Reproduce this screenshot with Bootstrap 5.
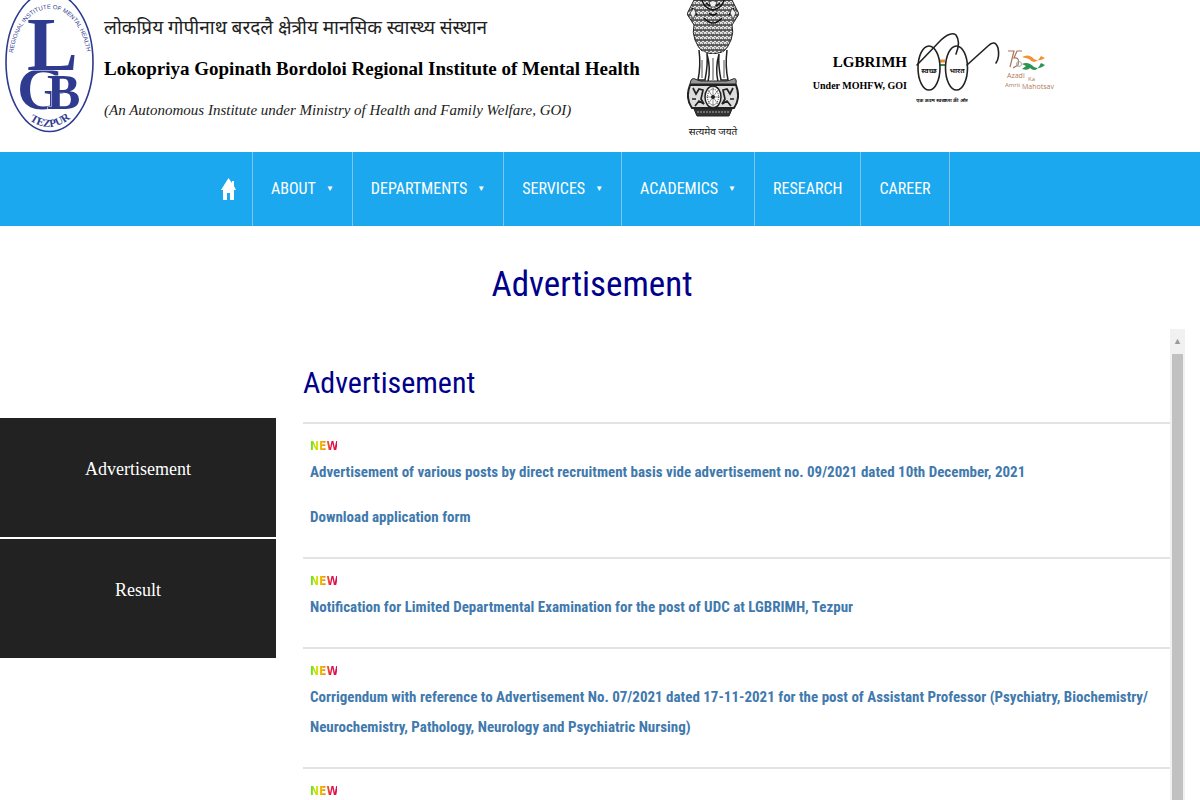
<!DOCTYPE html>
<html lang="en">
<head>
<meta charset="utf-8">
<meta name="viewport" content="width=device-width, initial-scale=1">
<title>Advertisement - LGBRIMH</title>
<link href="https://cdn.jsdelivr.net/npm/bootstrap@5.3.0/dist/css/bootstrap.min.css" rel="stylesheet">
<style>
body { font-family: "Roboto Condensed", "Liberation Sans", sans-serif; color: #000; background: #fff; }
a { text-decoration: none; }
.site-head { height: 152px; font-family: "Liberation Serif", "Noto Sans Devanagari", serif; line-height: 24px; white-space: nowrap; }
.crest { width: 104px; }
.names { width: 583px; padding-top: 16px; }
.names .hindi { font-size: 19px; margin-bottom: 17px; color: #222; }
.names .title { font-size: 19px; font-weight: 700; margin-bottom: 17px; }
.names .under { font-size: 15px; font-style: italic; color: #222; }
.emblem { width: 52px; }
.dept { width: 168px; padding-top: 50px; }
.dept .abbr { font-size: 15px; font-weight: 700; }
.dept .ministry { font-size: 10px; font-weight: 700; }
.main-nav { background: #1ba8ef; height: 74px; padding-left: 205px; }
.main-nav a { color: #fff; font-size: 16px; padding: 0 18px; border-right: 1px solid #7fc4ec; }
.main-nav a:first-child { padding: 0 16px; }
.main-nav .caret { font-size: 8px; margin-left: 10px; }
h1, h2 { color: #00008b; font-weight: 400; }
h1 { font-size: 35px; line-height: 42px; padding-top: 38px; margin-bottom: 23px; }
h2 { font-size: 30px; line-height: 36px; padding-top: 36px; margin-bottom: 21px; }
.side { width: 23%; padding-top: 89px; }
.side a { background: #222; color: #fff; height: 119px; padding-top: 36px; margin-bottom: 2px; font: 18px/30px "Liberation Serif", serif; }
.side a:hover { background: #333; }
.panel { margin-left: 27px; margin-right: 15px; min-width: 0; }
.notice { border-top: 2px solid #e3e3e3; padding: 12px 8px 25px 7px; font-size: 15px; line-height: 30px; font-weight: 700; }
.notice a { color: #4179ad; }
.notice p { margin: 0 0 15px; }
.notice p:last-child { margin: 0; }
.new-tag { display: block; width: 27px; height: 21px; font: 700 12px/21px "DejaVu Sans Condensed", sans-serif; background: linear-gradient(90deg, #5be01c, #e8e000 30%, #f08a10 55%, #e0104c 80%); -webkit-background-clip: text; background-clip: text; color: transparent; }
.track { width: 15px; background: #f1f1f1; }
.track .up { height: 25px; font-size: 9px; color: #999; }
.track .thumb { background: #c1c1c1; margin: 0 2px; }
</style>
</head>
<body class="vh-100 overflow-hidden d-flex flex-column">
<header class="site-head d-flex align-items-start flex-shrink-0">
  <svg class="crest flex-shrink-0" height="140" viewBox="0 0 104 140" fill="#2e3b8f" role="img" aria-label="Institute crest">
    <defs>
      <path id="ringTop" d="M13 53A37.500 54 0 0 1 87 55"/>
      <path id="ringLow" d="M28 119Q50 136 72 117"/>
    </defs>
    <ellipse cx="49.500" cy="62" rx="43.500" ry="69.500" fill="none" stroke="#2e3b8f" stroke-width="1.600"/>
    <text font-family="Liberation Sans" font-size="6"><textPath href="#ringTop">REGIONAL INSTITUTE OF MENTAL HEALTH</textPath></text>
    <text font-family="Liberation Serif" font-weight="700" font-size="11" text-anchor="middle"><textPath href="#ringLow" startOffset="50%">TEZPUR</textPath></text>
    <g font-family="Liberation Serif" font-weight="700" stroke="#fff" stroke-width="1" paint-order="stroke">
      <text x="17" y="109" font-size="62">G</text>
      <text x="27" y="70" font-size="76">L</text>
      <text x="47" y="109" font-size="50">B</text>
    </g>
  </svg>
  <div class="names flex-shrink-0">
    <div class="hindi" lang="hi">लोकप्रिय गोपीनाथ बरदलै क्षेत्रीय मानसिक स्वास्थ्य संस्थान</div>
    <div class="title">Lokopriya Gopinath Bordoloi Regional Institute of Mental Health</div>
    <div class="under">(An Autonomous Institute under Ministry of Health and Family Welfare, GOI)</div>
  </div>
  <svg class="emblem flex-shrink-0" height="140" viewBox="0 0 52 140" fill="none" stroke="#222" role="img" aria-label="State emblem of India">
    <defs><pattern id="mane" width="4" height="5" patternUnits="userSpaceOnUse"><rect width="4" height="5" fill="#555" stroke="none"/><path d="M0 1q2 3 4 0M1 4q1-2 3 0" stroke="#eee" stroke-width="1.200"/></pattern></defs>
    <path d="M7 0H45L52 14 45 25Q47 32 44 40Q41 48 36 52L26 54 16 52Q11 48 8 40Q5 32 7 25L0 14Z" fill="url(#mane)"/>
    <path d="M15 0q2 8 11 10q9-2 11-10M19 3l4 3M33 3l-4 3M22 13q4 4 8 0M5 8l5 7M47 8l-5 7M17 18q9 10 18 0" stroke="#111" stroke-width="1.300"/>
    <path d="M22 2q4-3 8 0l-2 5h-4zM3 13l4-5 2 5-3 6zM49 13l-4-5-2 5 3 6z" fill="#eee" stroke-width=".8"/>
    <path d="M12 50Q14 66 11 80H18Q21 65 20 53M20 54Q24 68 21 82H31Q28 68 32 54M32 54Q31 65 34 80H41Q38 66 40 50" fill="#fff" stroke-width="1.500"/>
    <path d="M26 58V80M15 60v18M37 60v18" stroke-width=".8"/>
    <path d="M3 84Q4 77 8 79T14 81T21 81T31 81T39 81T46 79T49 84Z" fill="#999"/>
    <path d="M3 85H49Q54 98 47 108H5Q-2 98 3 85Z" fill="#ddd" stroke-width="2"/>
    <path d="M6 88l3 6 3-5 4 1-2 9 3 5-5-3-4 5M46 88l-3 6-3-5-4 1 2 9-3 5 5-3 4 5M5 99h4M43 99h4" stroke-width="1.700"/>
    <ellipse cx="26" cy="97" rx="8" ry="11" fill="#fff" stroke-width="1.500"/>
    <ellipse cx="26" cy="97" rx="5.500" ry="8" stroke-dasharray="1 1"/>
    <path d="M26 87v20M19 97h14M21 90l10 14M31 90l-10 14" stroke-width=".5"/>
    <circle cx="26" cy="97" r="1.500" fill="#222"/>
    <path d="M7 109H45L42 116H10Z" fill="#333"/><path d="M10 112H42" stroke="#aaa" stroke-dasharray="2 1"/>
    <text x="26" y="135" text-anchor="middle" font-family="Noto Sans Devanagari" font-size="10" fill="#111" stroke="none" lang="hi">सत्यमेव जयते</text>
  </svg>
  <div class="dept text-end flex-shrink-0">
    <div class="abbr">LGBRIMH</div>
    <div class="ministry">Under MOHFW, GOI</div>
  </div>
  <svg class="flex-shrink-0" width="152" height="140" viewBox="907 0 152 140" fill="none" stroke="#222" stroke-width="1.600" role="img" aria-label="Swachh Bharat and Azadi Ka Amrit Mahotsav">
    <path d="M940 61H945" stroke="#f08b2c" stroke-width="3"/><path d="M940 65H945" stroke="#368b47" stroke-width="2"/>
    <ellipse cx="929" cy="68" rx="11" ry="22"/><ellipse cx="956.500" cy="68" rx="11" ry="22"/>
    <path d="M917 65L941 40Q951 31 956 35Q961 42 956 54M967 65L988 46Q995 39 998 48Q1000 57 996 63" stroke-linecap="round"/>
    <g fill="#111" stroke="none" font-family="Noto Sans Devanagari" font-weight="700" text-anchor="middle" lang="hi">
      <text x="929" y="73" font-size="7">स्वच्छ</text><text x="957" y="73" font-size="7">भारत</text>
      <text x="942" y="102" font-size="5">एक कदम स्वच्छता की ओर</text>
    </g>
    <path d="M1008 51H1014L1010 67M1022 51H1017L1014 58Q1020 57 1018 65L1013 68" stroke="#a8745c" stroke-width="1.200"/>
    <circle cx="1019" cy="64" r="2.500" stroke="#aaa" stroke-width="1"/>
    <path d="M1022 57Q1029 53 1034 59Q1039 62 1045 58L1041 56Q1035 66 1029 59Z" fill="#f39232" stroke="none"/>
    <path d="M1022 64Q1028 61 1034 67Q1040 70 1045 65L1041 63Q1036 74 1030 68Q1028 71 1022 69L1026 66Z" fill="#2c9450" stroke="none"/>
    <g fill="#b17a58" stroke="none" font-family="Open Sans" font-size="7"><text x="1007" y="78">Azadi</text><text x="1028" y="81" font-size="6">Ka</text><text x="1005" y="87" font-size="6">Amrit</text><text x="1022" y="89">Mahotsav</text></g>
  </svg>
</header>
<nav class="main-nav d-flex align-items-stretch flex-shrink-0" aria-label="Main">
  <a href="#" class="d-flex align-items-center" aria-label="Home"><svg width="15" height="22" viewBox="0 0 15 22" fill="#fff"><path d="M7.500 0L11 5V3H13V8L15 12H13V22H9V15H6V22H2V12H0Z"/></svg></a>
  <a href="#" class="d-flex align-items-center">ABOUT <span class="caret">▼</span></a>
  <a href="#" class="d-flex align-items-center">DEPARTMENTS <span class="caret">▼</span></a>
  <a href="#" class="d-flex align-items-center">SERVICES <span class="caret">▼</span></a>
  <a href="#" class="d-flex align-items-center">ACADEMICS <span class="caret">▼</span></a>
  <a href="#" class="d-flex align-items-center">RESEARCH</a>
  <a href="#" class="d-flex align-items-center">CAREER</a>
</nav>
<h1 class="text-center flex-shrink-0 pe-3">Advertisement</h1>
<main class="d-flex flex-grow-1 overflow-hidden">
  <aside class="side flex-shrink-0">
    <a href="#" class="d-block text-center">Advertisement</a>
    <a href="#" class="d-block text-center">Result</a>
  </aside>
  <section class="panel d-flex flex-grow-1">
    <div class="flex-grow-1 overflow-hidden">
      <h2>Advertisement</h2>
      <article class="notice"><span class="new-tag">NEW</span>
        <p><a href="#">Advertisement of various posts by direct recruitment basis vide advertisement no. 09/2021 dated 10th December, 2021</a></p>
        <p><a href="#">Download application form</a></p></article>
      <article class="notice"><span class="new-tag">NEW</span>
        <p><a href="#">Notification for Limited Departmental Examination for the post of UDC at LGBRIMH, Tezpur</a></p></article>
      <article class="notice"><span class="new-tag">NEW</span>
        <p><a href="#">Corrigendum with reference to Advertisement No. 07/2021 dated 17-11-2021 for the post of Assistant Professor (Psychiatry, Biochemistry/<wbr>Neurochemistry, Pathology, Neurology and Psychiatric Nursing)</a></p></article>
      <article class="notice"><span class="new-tag">NEW</span></article>
    </div>
    <div class="track d-flex flex-column flex-shrink-0" aria-hidden="true">
      <div class="up d-flex align-items-center justify-content-center">▲</div>
      <div class="thumb flex-grow-1"></div>
    </div>
  </section>
</main>
<script src="https://cdn.jsdelivr.net/npm/bootstrap@5.3.0/dist/js/bootstrap.bundle.min.js"></script>
</body>
</html>
